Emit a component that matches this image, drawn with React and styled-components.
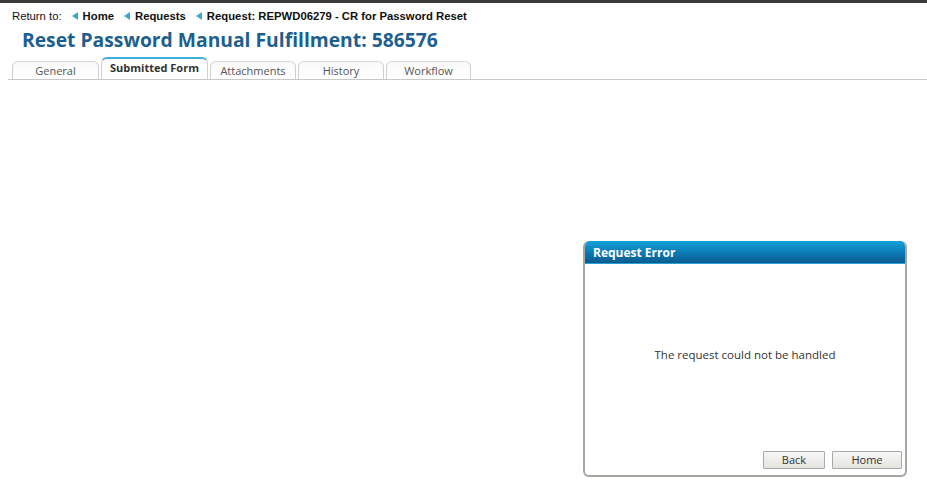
import React from "react";
import styled, { createGlobalStyle } from "styled-components";

const GlobalStyle = createGlobalStyle`
  html, body {
    margin: 0;
    padding: 0;
    background: #ffffff;
  }
  body {
    font-family: "Open Sans", "DejaVu Sans", sans-serif;
    color: #333;
  }
`;

const Page = styled.div`
  position: relative;
  width: 927px;
  height: 496px;
  overflow: hidden;
`;

const TopBar = styled.div`
  height: 3px;
  background: #3a3a3a;
`;

const Crumbs = styled.div`
  display: flex;
  align-items: center;
  gap: 6px;
  padding: 5px 0 0 12px;
  height: 15px;
  font-family: "Liberation Sans", Arial, sans-serif;
  font-size: 11.3px;
  color: #111;
`;

const Crumb = styled.span`
  display: flex;
  align-items: center;
  gap: 5px;
  font-weight: bold;
  margin-left: 4px;
`;

const Arrow = styled.span`
  width: 0;
  height: 0;
  border-top: 4px solid transparent;
  border-bottom: 4px solid transparent;
  border-right: 6px solid #3ba6d6;
`;

const Title = styled.h1`
  margin: 4px 0 0 22px;
  font-size: 19.3px;
  line-height: 26px;
  font-weight: bold;
  color: #1d5f8e;
`;

const TabBar = styled.div`
  display: flex;
  align-items: flex-end;
  gap: 2px;
  margin: 4px 0 0 8px;
  padding-left: 4px;
  height: 22px;
  border-bottom: 1px solid #c8c8c8;
`;

const Tab = styled.div`
  width: ${(p) => p.$w}px;
  height: ${(p) => (p.$active ? 22 : 18)}px;
  box-sizing: border-box;
  display: flex;
  align-items: center;
  justify-content: center;
  border: 1px solid #cfcfcf;
  border-bottom: none;
  border-top: ${(p) => (p.$active ? "2px solid #3db0de" : "1px solid #d6d6d6")};
  border-radius: 6px 6px 0 0;
  background: ${(p) => (p.$active ? "#ffffff" : "linear-gradient(#fafafa, #ffffff)")};
  font-size: 11px;
  font-weight: ${(p) => (p.$active ? "bold" : "normal")};
  color: ${(p) => (p.$active ? "#333" : "#555")};
  padding-bottom: ${(p) => (p.$active ? 4 : 1)}px;
`;

const Dialog = styled.div`
  position: absolute;
  left: 583px;
  top: 241px;
  width: 324px;
  height: 236px;
  box-sizing: border-box;
  border: 2px solid #a8a4a0;
  border-top: none;
  border-radius: 6px;
  background: #fff;
  display: flex;
  flex-direction: column;
  overflow: hidden;
`;

const DialogHeader = styled.div`
  height: 23px;
  box-sizing: border-box;
  padding: 3px 0 0 8px;
  background: linear-gradient(#14a3d9, #0b78b4 55%, #0a5c8e);
  border-bottom: 1px solid #2a9fd6;
  color: #fff;
  font-size: 12px;
  font-weight: bold;
`;

const DialogBody = styled.div`
  flex: 1;
  display: flex;
  align-items: center;
  justify-content: center;
  font-size: 11.5px;
  color: #333;
  padding-bottom: 6px;
`;

const DialogFooter = styled.div`
  display: flex;
  justify-content: flex-end;
  gap: 7px;
  padding: 0 3px 6px 0;
`;

const Button = styled.button`
  width: ${(p) => p.$w}px;
  height: 18px;
  padding: 0 0 1px;
  border: 1px solid #a9a9a9;
  border-radius: 1px;
  background: linear-gradient(#f7f7f5, #e4e3e0);
  font-family: "Open Sans", "DejaVu Sans", sans-serif;
  font-size: 11px;
  color: #333;
`;

const tabs = [
  { label: "General", w: 87 },
  { label: "Submitted Form", w: 107, active: true },
  { label: "Attachments", w: 86 },
  { label: "History", w: 86 },
  { label: "Workflow", w: 85 },
];

export default function App() {
  return (
    <Page>
      <GlobalStyle />
      <TopBar />
      <Crumbs>
        <span>Return to:</span>
        <Crumb>
          <Arrow />
          Home
        </Crumb>
        <Crumb>
          <Arrow />
          Requests
        </Crumb>
        <Crumb>
          <Arrow />
          Request: REPWD06279 - CR for Password Reset
        </Crumb>
      </Crumbs>
      <Title>Reset Password Manual Fulfillment: 586576</Title>
      <TabBar>
        {tabs.map((t) => (
          <Tab key={t.label} $w={t.w} $active={t.active}>
            {t.label}
          </Tab>
        ))}
      </TabBar>
      <Dialog>
        <DialogHeader>Request Error</DialogHeader>
        <DialogBody>The request could not be handled</DialogBody>
        <DialogFooter>
          <Button $w={62}>Back</Button>
          <Button $w={70}>Home</Button>
        </DialogFooter>
      </Dialog>
    </Page>
  );
}
